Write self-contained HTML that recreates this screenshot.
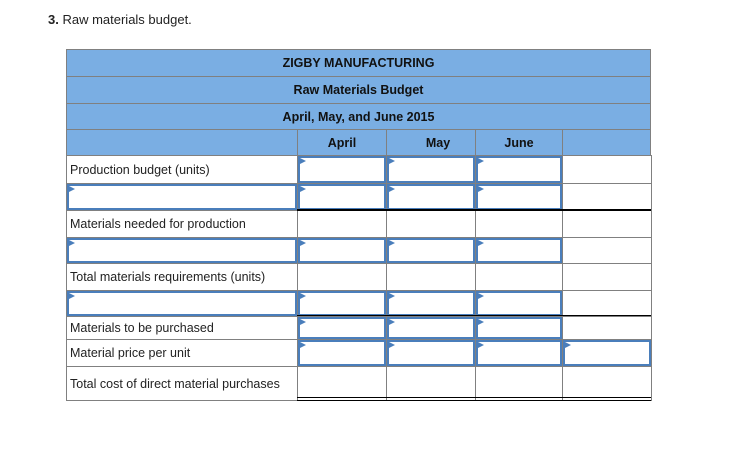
<!DOCTYPE html><html><head><style>
body{margin:0;width:731px;height:456px;background:#fff;font-family:"Liberation Sans",Arial,sans-serif;position:relative;overflow:hidden}
div{position:absolute;box-sizing:border-box}
.t{font-size:13px;color:#222}
.h{background:#7aaee3;border:1px solid #808080;font-weight:bold;font-size:12.5px;color:#111;text-align:center}
.c{border:1px solid #808080;background:#fff}
.i{border:2px solid #4a7ebb;background:#fff}
.i:before{content:"";position:absolute;left:0;top:0;border-left:6px solid #4a7ebb;border-top:3px solid transparent;border-bottom:3px solid transparent}
.l{font-size:12.5px;color:#222;padding:0 0 0 3px;display:flex;align-items:center}
</style></head><body>
<div class="t" style="left:48px;top:12px"><b>3.</b> Raw materials budget.</div>
<div class="h" style="left:66px;top:49px;width:585px;height:28px;line-height:27px">ZIGBY MANUFACTURING</div>
<div class="h" style="left:66px;top:76px;width:585px;height:28px;line-height:27px">Raw Materials Budget</div>
<div class="h" style="left:66px;top:103px;width:585px;height:27px;line-height:26px">April, May, and June 2015</div>
<div class="h" style="left:66px;top:129px;width:232px;height:27px"></div>
<div class="h" style="left:297px;top:129px;width:90px;height:27px;line-height:26px">April</div>
<div class="h" style="left:386px;top:129px;width:90px;height:27px;line-height:26px;padding-left:14px">May</div>
<div class="h" style="left:475px;top:129px;width:88px;height:27px;line-height:26px">June</div>
<div class="h" style="left:562px;top:129px;width:89px;height:27px"></div>
<div id="g"></div>
<script>
var rows=[[155,28,"Production budget (units)",[0,1,1,1,0]],[183,27,"",[1,1,1,1,0]],[210,27,"Materials needed for production",[0,0,0,0,0]],[237,26,"",[1,1,1,1,0]],[263,27,"Total materials requirements (units)",[0,0,0,0,0]],[290,26,"",[1,1,1,1,0]],[316,23,"Materials to be purchased",[0,1,1,1,0]],[339,27,"Material price per unit",[0,1,1,1,1]],[366,34,"Total cost of direct material purchases",[0,0,0,0,0]]];
var cx=[66,297,386,475,562,651],h="";
rows.forEach(function(r){for(var k=0;k<5;k++){var w=cx[k+1]-cx[k]+1;h+='<div class="c'+(k==0&&r[2]?' l':'')+'" style="left:'+cx[k]+'px;top:'+r[0]+'px;width:'+w+'px;height:'+(r[1]+1)+'px">'+(k==0?r[2]:'')+'</div>';if(r[3][k])h+='<div class="i" style="left:'+(cx[k]+1)+'px;top:'+(r[0]+1)+'px;width:'+(w-2)+'px;height:'+(r[1]-1)+'px"></div>';}});
h+='<div style="left:297px;top:209px;width:354px;height:2px;background:#000"></div>';
h+='<div style="left:297px;top:315px;width:354px;height:1px;background:#000"></div>';
h+='<div style="left:297px;top:397px;width:354px;height:4px;border-top:1px solid #000;border-bottom:1px solid #000"></div>';
document.getElementById('g').outerHTML=h;
</script>
</body></html>
